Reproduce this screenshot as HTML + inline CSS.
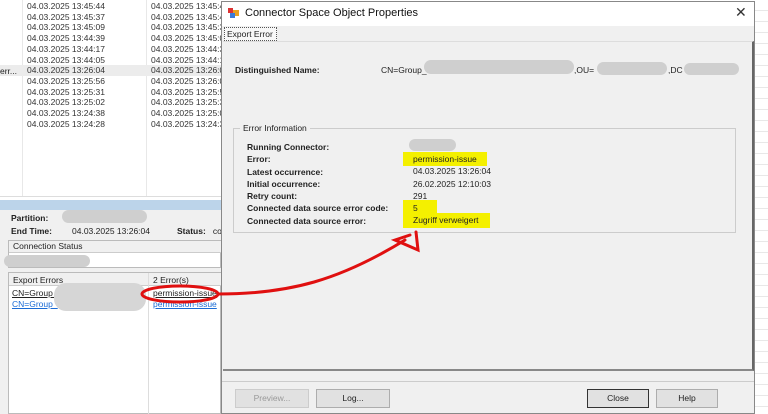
<!DOCTYPE html>
<html><head><meta charset="utf-8"><style>
*{margin:0;padding:0;box-sizing:border-box}
body{width:768px;height:414px;overflow:hidden;position:relative;background:#fff;font-family:"Liberation Sans",Arial,sans-serif;font-size:8.5px;color:#222}
.a{position:absolute;white-space:nowrap}
.blur{position:absolute;background:#cfcfcf;border-radius:8px}
b{font-weight:bold}
.btn{position:absolute;height:19px;border:1px solid #adadad;background:#e1e1e1;text-align:center;line-height:17px;font-size:8.5px}
</style></head><body>
<div class="a" style="left:0;top:0;width:221px;height:196px;background:#fff">
<div style="position:absolute;left:22px;top:0;width:1px;height:196px;background:#e8e8e8"></div>
<div style="position:absolute;left:146px;top:0;width:1px;height:196px;background:#e8e8e8"></div>
<div style="position:absolute;left:0;top:65px;width:221px;height:11px;background:#ececec"></div>
</div>
<div class="a" style="left:0;top:66px;">err...</div>
<div class="a" style="left:27px;top:1px;line-height:10.7px;color:#333">04.03.2025 13:45:44<br>04.03.2025 13:45:37<br>04.03.2025 13:45:09<br>04.03.2025 13:44:39<br>04.03.2025 13:44:17<br>04.03.2025 13:44:05<br>04.03.2025 13:26:04<br>04.03.2025 13:25:56<br>04.03.2025 13:25:31<br>04.03.2025 13:25:02<br>04.03.2025 13:24:38<br>04.03.2025 13:24:28</div>
<div class="a" style="left:151px;top:1px;line-height:10.7px;color:#333;width:70px;overflow:hidden">04.03.2025 13:45:44<br>04.03.2025 13:45:41<br>04.03.2025 13:45:38<br>04.03.2025 13:45:05<br>04.03.2025 13:44:39<br>04.03.2025 13:44:17<br>04.03.2025 13:26:04<br>04.03.2025 13:26:01<br>04.03.2025 13:25:56<br>04.03.2025 13:25:31<br>04.03.2025 13:25:02<br>04.03.2025 13:24:38</div>
<div class="a" style="left:0;top:196px;width:221px;height:1px;background:#ddd"></div>
<div class="a" style="left:0;top:200px;width:221px;height:10px;background:#bcd4ea"></div>
<div class="a" style="left:0;top:210px;width:221px;height:204px;background:#f0f0f0"></div>
<div class="a" style="left:11px;top:213px"><b>Partition:</b></div>
<div class="blur" style="left:62px;top:210px;width:85px;height:13px"></div>
<div class="a" style="left:11px;top:226px"><b>End Time:</b></div>
<div class="a" style="left:72px;top:226px">04.03.2025 13:26:04</div>
<div class="a" style="left:177px;top:226px"><b>Status:</b>&nbsp;&nbsp; co</div>
<div class="a" style="left:8px;top:240px;width:213px;height:28px;background:#fff;border:1px solid #bbb"></div>
<div class="a" style="left:9px;top:241px;width:212px;height:12px;background:#f0f0f0;border-bottom:1px solid #ccc;padding-left:4px;line-height:11px">Connection Status</div>
<div class="blur" style="left:4px;top:255px;width:86px;height:12px"></div>
<div class="a" style="left:8px;top:272px;width:213px;height:142px;background:#fff;border:1px solid #bbb"></div>
<div class="a" style="left:9px;top:273px;width:212px;height:13px;background:#f0f0f0;border-bottom:1px solid #ccc"></div>
<div class="a" style="left:148px;top:273px;width:1px;height:141px;background:#ddd"></div>
<div class="a" style="left:13px;top:275px">Export Errors</div>
<div class="a" style="left:153px;top:275px">2 Error(s)</div>
<div class="a" style="left:12px;top:288px;text-decoration:underline">CN=Group_</div>
<div class="a" style="left:12px;top:299px;text-decoration:underline;color:#1a6bd6">CN=Group_</div>
<div class="a" style="left:153px;top:288px;text-decoration:underline">permission-issue</div>
<div class="a" style="left:153px;top:299px;text-decoration:underline;color:#1a6bd6">permission-issue</div>
<div class="blur" style="left:54px;top:283px;width:92px;height:28px;border-radius:12px;background:#d6d6d6"></div>
<div class="a" style="left:754px;top:0;width:14px;height:414px;background:repeating-linear-gradient(#fff 0 10px,#e8e8e8 10px 11px)"></div>
<div class="a" style="left:221px;top:1px;width:534px;height:413px;background:#f0f0f0;border:1px solid #888">
<div style="position:absolute;left:0;top:0;width:532px;height:24px;background:#fff"></div>
<div style="position:absolute;left:6px;top:6px;width:12px;height:10px"><div style="position:absolute;left:0;top:0;width:5px;height:5px;background:#d33"></div><div style="position:absolute;left:5px;top:2px;width:6px;height:6px;background:#e8a020"></div><div style="position:absolute;left:2px;top:5px;width:5px;height:5px;background:#3a7ad8"></div></div>
<div class="a" style="left:23px;top:5px;font-size:11px;color:#111">Connector Space Object Properties</div>
<div class="a" style="left:513px;top:2px;font-size:14px;color:#333">✕</div>
<div style="position:absolute;left:2px;top:25px;width:53px;height:14px;background:#f8f8f8;border:1px dotted #555;line-height:12px;padding-left:2px">Export Error</div>
<div style="position:absolute;left:1px;top:39px;width:531px;height:330px;border-top:1px solid #ddd;border-right:2px solid #666;border-bottom:2px solid #888"></div>
<div class="a" style="left:13px;top:63px"><b>Distinguished Name:</b></div>
<div class="a" style="left:159px;top:63px">CN=Group_</div>
<div class="blur" style="left:202px;top:58px;width:150px;height:14px"></div>
<div class="a" style="left:352px;top:63px">,OU=</div>
<div class="blur" style="left:375px;top:60px;width:70px;height:13px"></div>
<div class="a" style="left:446px;top:63px">,DC</div>
<div class="blur" style="left:462px;top:61px;width:55px;height:12px"></div>
<div style="position:absolute;left:11px;top:126px;width:503px;height:105px;border:1px solid #ccc"></div>
<div class="a" style="left:18px;top:121px;background:#f0f0f0;padding:0 3px">Error Information</div>
<div class="a" style="left:25px;top:139px;line-height:12.3px"><b>Running Connector:<br>Error:<br>Latest occurrence:<br>Initial occurrence:<br>Retry count:<br>Connected data source error code:<br>Connected data source error:</b></div>
<div class="blur" style="left:187px;top:137px;width:47px;height:12px"></div>
<div style="position:absolute;left:181px;top:150px;width:84px;height:14px;background:#f4f000"></div>
<div style="position:absolute;left:181px;top:198px;width:34px;height:15px;background:#f4f000"></div>
<div style="position:absolute;left:181px;top:211px;width:87px;height:15px;background:#f4f000"></div>
<div class="a" style="left:191px;top:151px;line-height:12.3px">permission-issue<br>04.03.2025 13:26:04<br>26.02.2025 12:10:03<br>291<br>5<br>Zugriff verweigert</div>
<div style="position:absolute;left:0;top:379px;width:532px;height:1px;background:#ccc"></div>
<div class="btn" style="left:13px;top:387px;width:74px;color:#999;border-color:#ccc">Preview...</div>
<div class="btn" style="left:94px;top:387px;width:74px">Log...</div>
<div class="btn" style="left:365px;top:387px;width:62px;border:1px solid #333">Close</div>
<div class="btn" style="left:434px;top:387px;width:62px">Help</div>
</div>
<svg class="a" style="left:0;top:0" width="768" height="414"><g fill="none" stroke="#e01010" stroke-width="3" stroke-linecap="round">
<ellipse cx="180" cy="294" rx="38" ry="8"/>
<path d="M218 294 C 290 294 340 280 405 240"/>
<path d="M410 235 L 395 240 L 418 250 L 416 232"/>
</g></svg>
</body></html>
